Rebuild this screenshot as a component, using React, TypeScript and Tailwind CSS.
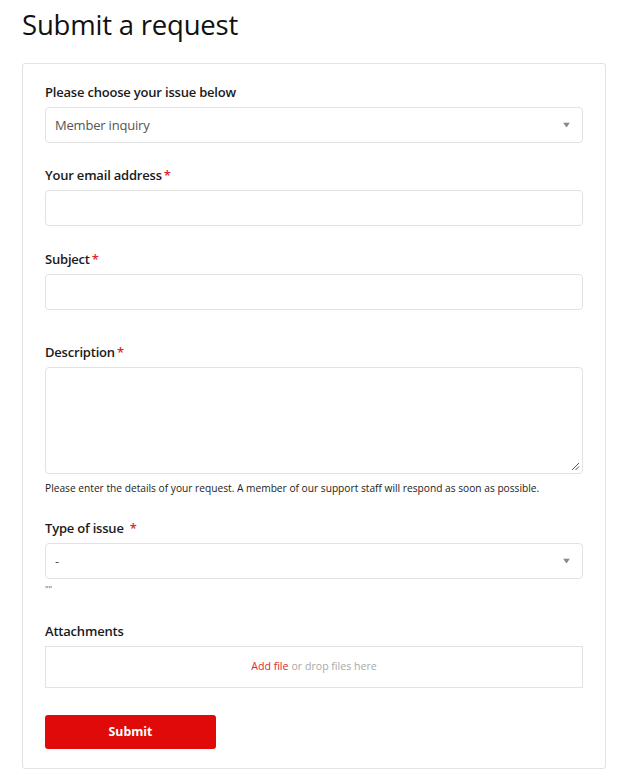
import type { ReactNode } from 'react';

const font = { fontFamily: '"Open Sans", "Noto Sans", Arial, sans-serif' };

function Label({ children, required, gap }: { children: ReactNode; required?: boolean; gap?: boolean }) {
  return (
    <label className="block text-[13px] font-semibold leading-5 tracking-[-0.2px] text-[#1a1a1a]">
      {children}
      {required && <span className={`text-[#e0262b] ${gap ? 'ml-[6px]' : 'ml-[2px]'}`}>*</span>}
    </label>
  );
}

function Caret() {
  return (
    <svg width="7" height="5" viewBox="0 0 7 5" className="absolute right-[12px] top-1/2 -translate-y-1/2">
      <path d="M0 0h7L3.5 5z" fill="#888" />
    </svg>
  );
}

export default function App() {
  return (
    <div className="min-h-[784px] bg-white pl-[22px] pr-[19px] pt-[8px]" style={font}>
      <h1 className="text-[27.5px] font-normal leading-[34px] tracking-[-0.2px] text-[#111]">Submit a request</h1>

      <form className="mt-[21px] rounded-[3px] border border-[#e3e3e3] px-[22px] pb-[19px] pt-[18px]">
        <Label>Please choose your issue below</Label>
        <div className="relative mt-[5px] flex h-[36px] items-center rounded-[4px] border border-[#e2e2e2] px-[9px] pt-[1px] text-[13px] tracking-[-0.2px] text-[#555]">
          Member inquiry
          <Caret />
        </div>

        <div className="mt-[22px]">
          <Label required>Your email address</Label>
          <div className="mt-[5px] h-[36px] rounded-[4px] border border-[#e2e2e2]" />
        </div>

        <div className="mt-[23px]">
          <Label required>Subject</Label>
          <div className="mt-[5px] h-[36px] rounded-[4px] border border-[#e2e2e2]" />
        </div>

        <div className="mt-[32px]">
          <Label required>Description</Label>
          <div className="relative mt-[5px] h-[107px] rounded-[4px] border border-[#e2e2e2]">
            <svg width="9" height="9" viewBox="0 0 9 9" className="absolute bottom-[2px] right-[2px]">
              <path d="M1 8L8 1M4.5 8L8 4.5" stroke="#555" strokeWidth="1" />
            </svg>
          </div>
          <p className="mt-[6px] text-[10.2px] leading-4 text-[#222]">
            Please enter the details of your request. A member of our support staff will respond as soon as possible.
          </p>
        </div>

        <div className="mt-[22px]">
          <Label required gap>Type of issue</Label>
          <div className="relative mt-[5px] flex h-[36px] items-center rounded-[4px] border border-[#e2e2e2] px-[9px] pt-[1px] text-[13px] text-[#555]">
            -
            <Caret />
          </div>
          <p className="mt-[5px] h-[12px] text-[9px] leading-3 text-[#666]">""</p>
        </div>

        <div className="mt-[25px]">
          <Label>Attachments</Label>
          <div className="mt-[5px] flex h-[42px] items-center justify-center border border-[#e2e2e2] text-[10.6px]">
            <span className="text-[#e0262b]">Add file</span>
            <span className="ml-[3px] text-[#a9a9a9]">or drop files here</span>
          </div>
        </div>

        <button
          type="button"
          className="mt-[27px] h-[34px] w-[171px] rounded-[3px] bg-[#e00a0a] text-[12.3px] font-bold text-white"
        >
          Submit
        </button>
      </form>
    </div>
  );
}
